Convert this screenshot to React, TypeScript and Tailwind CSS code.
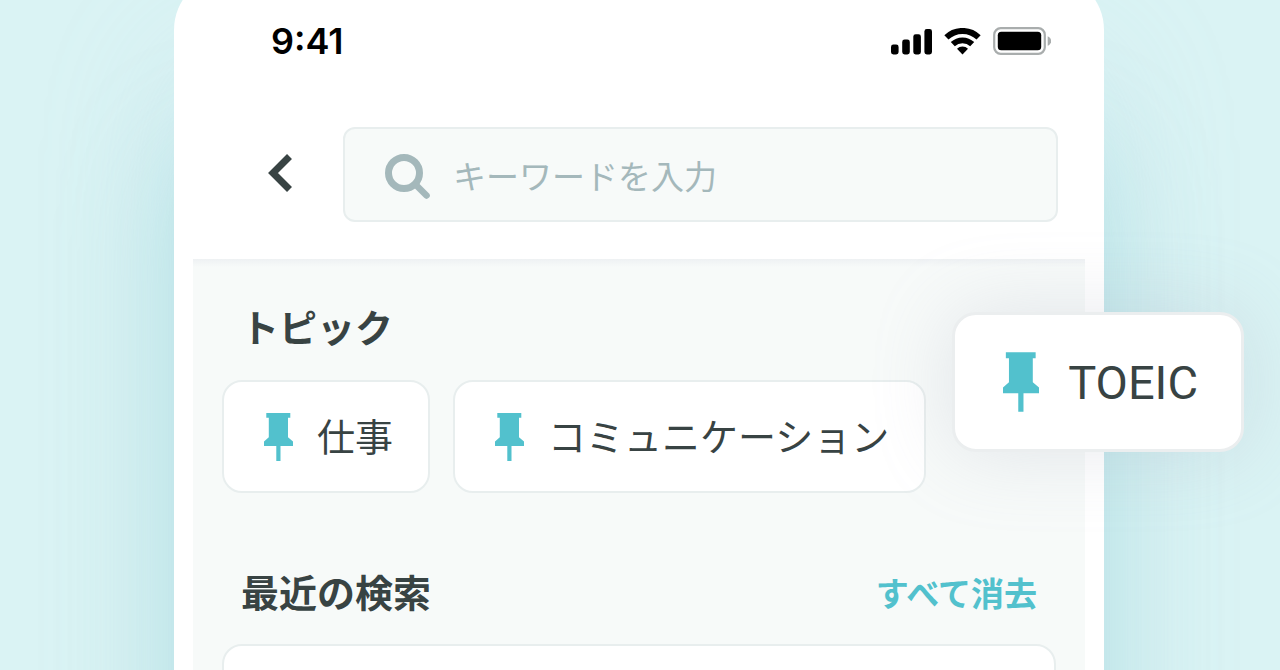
import { useState } from 'react'

const TOPICS = ['仕事', 'コミュニケーション']

function PinIcon({ className }: { className: string }) {
  return (
    <svg viewBox="0 0 29 48" className={className} fill="#52c1cd" aria-hidden="true">
      <path d="M2.3 0H26.3V4.8H24V24.2L29 28.4V33H16.5V48H12.3V33H0V28.4L4.8 24.2V4.8H2.3Z" />
    </svg>
  )
}

function SearchIcon() {
  return (
    <svg viewBox="0 0 45 45" className="w-[45px] h-[45px] shrink-0" fill="none" stroke="#a4b8bb" aria-hidden="true">
      <circle cx="19" cy="19" r="15.5" strokeWidth="7" />
      <path d="M30.5 30.5L41.5 41.5" strokeWidth="6.6" strokeLinecap="round" />
    </svg>
  )
}

function StatusIcons() {
  return (
    <div className="flex items-center gap-3">
      <svg viewBox="0 0 41 27" className="w-[41px] h-[27px]" aria-hidden="true">
        <rect x="0" y="16.5" width="7.6" height="10" rx="2.4" />
        <rect x="11.2" y="11.5" width="7.6" height="15" rx="2.4" />
        <rect x="22.3" y="6.3" width="7.6" height="20.2" rx="2.4" />
        <rect x="33.4" y="1" width="7.6" height="25.5" rx="2.4" />
      </svg>
      <svg viewBox="0 0 37 27" className="w-[37px] h-[27px]" fill="none" stroke="#000" strokeWidth="6" aria-hidden="true">
        <path d="M2.4 9.4A23.3 23.3 0 0 1 34.6 9.4" />
        <path d="M8.8 16.2A14 14 0 0 1 28.2 16.2" strokeWidth="5.8" />
        <path d="M13 20.8A7.8 7.8 0 0 1 24 20.8L18.5 26.5Z" fill="#000" stroke="none" />
      </svg>
      <svg viewBox="0 0 58 28" className="w-[58px] h-[28px]" aria-hidden="true">
        <rect x="1.2" y="1.2" width="50.6" height="25.6" rx="6.5" fill="none" stroke="#a9adad" strokeWidth="2.2" />
        <rect x="4.8" y="4.8" width="43.4" height="18.4" rx="3.5" />
        <path d="M54.7 9.2C59.3 11 59.3 17 54.7 18.8Z" fill="#a9adad" />
      </svg>
    </div>
  )
}

export default function App() {
  const [keyword, setKeyword] = useState('')

  return (
    <main className="h-screen overflow-hidden bg-[#daf3f4] pl-[174px] pr-[176px] text-[#384343] font-['Noto_Sans_CJK_JP',sans-serif]">
      <div className="relative -mt-[26px] flex min-h-[150vh] flex-col rounded-[56px] bg-white pt-[26px] shadow-[0_170px_110px_rgba(110,195,203,0.34),0_80px_130px_rgba(190,220,235,0.25)]">
        {/* status bar */}
        <div className="flex h-[82px] items-center justify-between pl-[97px] pr-[53px] text-black">
          <span className="font-['Inter',sans-serif] text-[36px] font-semibold">9:41</span>
          <StatusIcons />
        </div>

        {/* search bar */}
        <div className="mt-[45px] flex items-center pb-[37px] pl-[94px] pr-[46px]">
          <button type="button" aria-label="戻る" className="mr-[50px] shrink-0">
            <svg viewBox="0 0 25 38" className="mb-1 h-[38px] w-[25px]" fill="none" stroke="#384343" strokeWidth="7" aria-hidden="true">
              <path d="M21.5 2.5L5 19L21.5 35.5" />
            </svg>
          </button>
          <label className="flex h-[95px] flex-1 items-center gap-[23px] rounded-xl border-2 border-[#e8eeee] bg-[#f7faf9] px-10 pt-[3px]">
            <SearchIcon />
            <input
              type="text"
              aria-label="キーワード"
              placeholder="キーワードを入力"
              value={keyword}
              onChange={e => setKeyword(e.target.value)}
              className="min-w-0 flex-1 bg-transparent text-[33px] outline-none placeholder:text-[#a4b8bb]"
            />
          </label>
        </div>

        <div className="mx-[19px] flex flex-1 flex-col bg-[#f7faf9] bg-[linear-gradient(#eef1f3,#f7faf9_8px)] px-[29px] pt-[43px]">
          <h2 className="px-[19px] text-[38px] leading-[48px] font-bold">トピック</h2>
          <div className="mt-[30px] flex gap-[23px]">
            {TOPICS.map(topic => (
              <button
                key={topic}
                type="button"
                className="flex h-[113px] items-center gap-6 rounded-[20px] border-2 border-[#e8eeee] bg-white pl-10 pr-[35px] text-[38px] whitespace-nowrap"
              >
                <PinIcon className="h-12 w-[29px]" />
                <span className="pb-1">{topic}</span>
              </button>
            ))}
          </div>

          <div className="mt-[73px] flex items-center justify-between px-[19px] leading-[48px] font-bold">
            <h2 className="text-[38px]">最近の検索</h2>
            <button type="button" className="pt-0.5 text-[33px] text-[#52c1cd]">すべて消去</button>
          </div>
          <div className="mt-7 flex-1 rounded-t-[20px] border-2 border-[#e8eeee] bg-white" />
        </div>

        {/* floating topic */}
        <button
          type="button"
          className="absolute top-[338px] -right-[140px] flex h-[140px] items-center gap-[29px] rounded-3xl border-[3px] border-[#ebeeef] bg-white pl-12 pr-[43px] font-['Roboto',sans-serif] text-[47px] shadow-[0_0_80px_rgba(160,165,185,0.24)]"
        >
          <PinIcon className="h-[60px] w-9" />
          <span className="pt-0.5">TOEIC</span>
        </button>
      </div>
    </main>
  )
}
